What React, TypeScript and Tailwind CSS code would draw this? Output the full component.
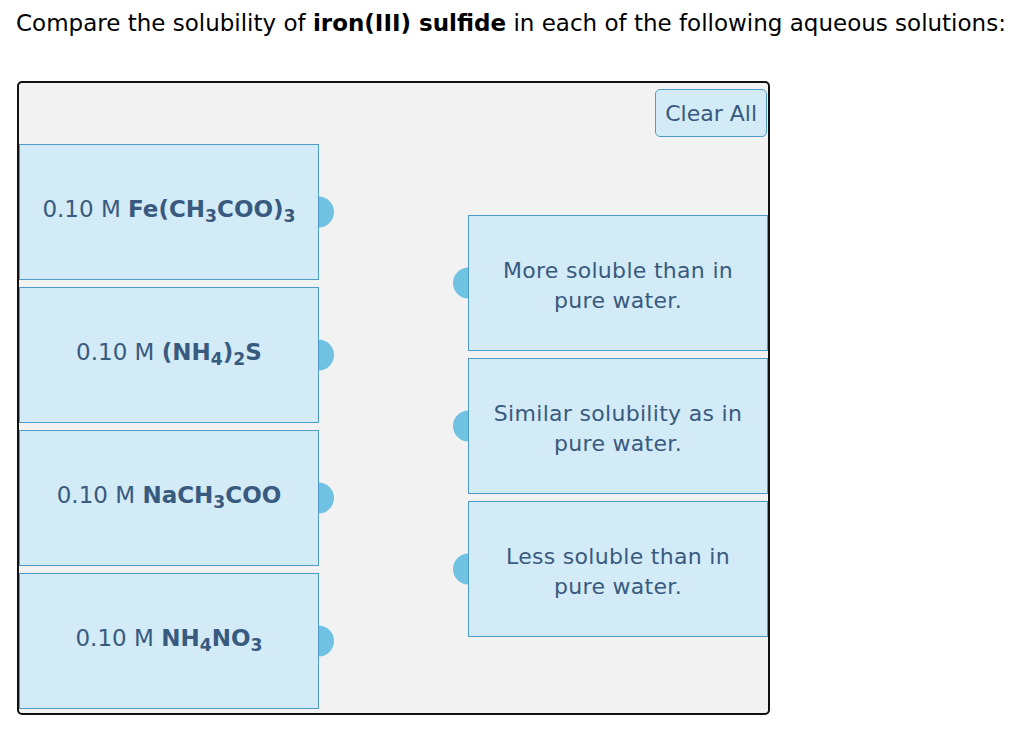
import React from 'react';

const font = { fontFamily: '"DejaVu Sans", Verdana, sans-serif' };

const solutions: React.ReactNode[] = [
  <>0.10 M <b>Fe(CH<sub>3</sub>COO)<sub>3</sub></b></>,
  <>0.10 M <b>(NH<sub>4</sub>)<sub>2</sub>S</b></>,
  <>0.10 M <b>NaCH<sub>3</sub>COO</b></>,
  <>0.10 M <b>NH<sub>4</sub>NO<sub>3</sub></b></>,
];

const targets = [
  'More soluble than in pure water.',
  'Similar solubility as in pure water.',
  'Less soluble than in pure water.',
];

function Dot({ side }: { side: 'left' | 'right' }) {
  return (
    <div
      className={`absolute top-1/2 -translate-y-1/2 w-[31px] h-[31px] rounded-full bg-[#6fc2e1] ${
        side === 'right' ? 'right-[-15px]' : 'left-[-15px]'
      }`}
    />
  );
}

export default function App() {
  return (
    <div className="bg-white w-[1014px] h-[730px] text-[#111]" style={font}>
      <div className="pl-[16px] pt-[10px] text-[23px] leading-[27px] text-black">
        Compare the solubility of <b>iron(III) sulfide</b> in each of the following aqueous solutions:
      </div>

      <div className="ml-[17px] mt-[44px] w-[753px] border-2 border-[#111] rounded-[5px] bg-[#f2f2f2] pb-[4px]">
        <div className="flex justify-end pt-[6px] pr-[1px]">
          <button className="h-[48px] px-[9px] rounded-[5px] border border-[#4f9bc8] bg-[#d3eaf7] text-[22px] text-[#395a7f]">
            Clear All
          </button>
        </div>

        <div className="flex justify-between mt-[7px]">
          <div className="flex flex-col gap-[7px]">
            {solutions.map((s, i) => (
              <div key={i} className="relative w-[300px] h-[136px]">
                <Dot side="right" />
                <div className="relative h-full flex items-center justify-center border border-[#4f9bc8] bg-[#d3eaf7] text-[23px] text-[#395a7f]">
                  <span className="-mt-[5px]">{s}</span>
                </div>
              </div>
            ))}
          </div>

          <div className="flex flex-col gap-[7px] mt-[71px]">
            {targets.map((t) => (
              <div key={t} className="relative w-[300px] h-[136px]">
                <Dot side="left" />
                <div className="relative h-full flex items-center justify-center border border-[#4f9bc8] bg-[#d3eaf7] px-[20px] pt-[6px] text-center text-[22px] tracking-[0.3px] leading-[30px] text-[#395a7f]">
                  {t}
                </div>
              </div>
            ))}
          </div>
        </div>
      </div>
    </div>
  );
}
